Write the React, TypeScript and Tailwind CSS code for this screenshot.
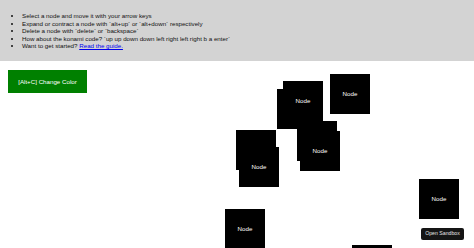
const nodes = [
  { x: 277, y: 89 },
  { x: 283, y: 81 },
  { x: 330, y: 74 },
  { x: 297, y: 121 },
  { x: 300, y: 131 },
  { x: 236, y: 130 },
  { x: 239, y: 147 },
  { x: 419, y: 179 },
  { x: 225, y: 209 },
  { x: 352, y: 245 },
];

export default function App() {
  return (
    <div className="relative h-[248px] w-[474px] overflow-hidden bg-white font-['Liberation_Sans',Arial,sans-serif] text-[6.2px] leading-[7.6px] text-[#111]">
      {/* Instructions */}
      <div className="h-[61px] bg-[#d3d3d3] pl-[22px] pt-[12px]">
        <ul className="list-disc">
          <li>Select a node and move it with your arrow keys</li>
          <li>Expand or contract a node with `alt+up` or `alt+down` respectively</li>
          <li>Delete a node with `delete` or `backspace`</li>
          <li>How about the konami code? `up up down down left right left right b a enter`</li>
          <li>
            Want to get started?{" "}
            <a href="#" className="text-[#0000ee] underline">
              Read the guide.
            </a>
          </li>
        </ul>
      </div>

      {/* Canvas */}
      <div className="px-[8px] pt-[9px]">
        <button className="flex h-[23px] w-[79px] items-center justify-center bg-[#008000] text-white">
          [Alt+C] Change Color
        </button>
      </div>

      {nodes.map((n, i) => (
        <div
          key={i}
          className="absolute flex h-[40px] w-[40px] items-center justify-center bg-black text-white"
          style={{ left: n.x, top: n.y }}
        >
          Node
        </div>
      ))}

      <button className="absolute left-[421px] top-[228px] flex h-[12px] w-[43px] items-center justify-center rounded-[2px] bg-[#151515] text-[5.2px] text-[#e5e5e5]">
        Open Sandbox
      </button>
    </div>
  );
}
